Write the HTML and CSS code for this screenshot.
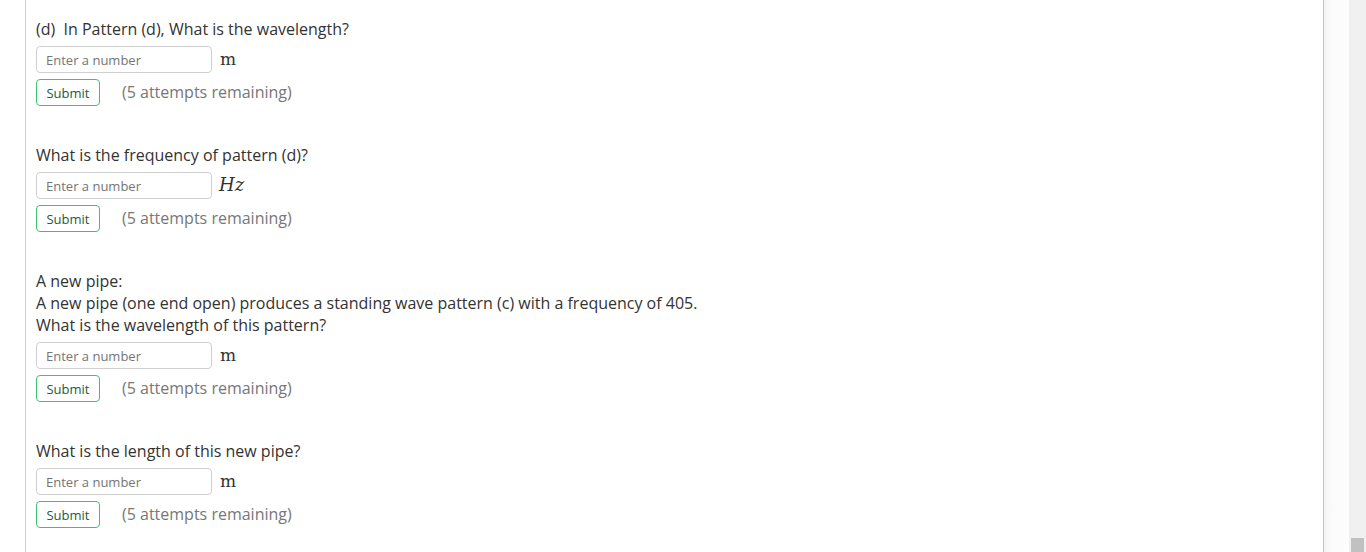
FILE: index.html
```html
<!DOCTYPE html>
<html>
<head>
<meta charset="utf-8">
<link rel="stylesheet" href="styles.css">
</head>
<body>
<div class="page">
  <div class="panel">
    <div class="q">
      <div class="prompt">(d)&nbsp; In Pattern (d), What is the wavelength?</div>
      <div class="row"><input class="num" type="text" placeholder="Enter a number"><span class="unit">m</span></div>
      <div class="row"><button class="submit">Submit</button><span class="att">(5 attempts remaining)</span></div>
    </div>
    <div class="q">
      <div class="prompt">What is the frequency of pattern (d)?</div>
      <div class="row"><input class="num" type="text" placeholder="Enter a number"><span class="unit it">Hz</span></div>
      <div class="row"><button class="submit">Submit</button><span class="att">(5 attempts remaining)</span></div>
    </div>
    <div class="q">
      <div class="prompt">A new pipe:<br>A new pipe (one end open) produces a standing wave pattern (c) with a frequency of 405.<br>What is the wavelength of this pattern?</div>
      <div class="row"><input class="num" type="text" placeholder="Enter a number"><span class="unit">m</span></div>
      <div class="row"><button class="submit">Submit</button><span class="att">(5 attempts remaining)</span></div>
    </div>
    <div class="q">
      <div class="prompt">What is the length of this new pipe?</div>
      <div class="row"><input class="num" type="text" placeholder="Enter a number"><span class="unit">m</span></div>
      <div class="row"><button class="submit">Submit</button><span class="att">(5 attempts remaining)</span></div>
    </div>
  </div>
  <div class="strip"></div>
  <div class="scrollbar"><div class="thumb"></div></div>
</div>
</body>
</html>
```
FILE: styles.css
```css
html, body {
  margin: 0;
  padding: 0;
  background: #fff;
  height: 552px;
  overflow: hidden;
}
body {
  font-family: "Open Sans", "Liberation Sans", sans-serif;
  color: #333;
}
.page {
  display: flex;
  height: 552px;
}
.panel {
  flex: none;
  margin-left: 25px;
  width: 1287px;
  border-left: 1px solid #d0d0d0;
  border-right: 1px solid #c4c4c4;
  padding: 18px 0 0 10px;
  display: flex;
  flex-direction: column;
  gap: 38px;
}
.strip {
  flex: none;
  width: 25px;
  background: linear-gradient(to right, #f4f4f4, #fcfcfc 40%, #fdfdfd);
}
.scrollbar {
  flex: none;
  width: 17px;
  background: #f0f0f0;
  display: flex;
  flex-direction: column;
  justify-content: flex-end;
  align-items: center;
}
.thumb {
  width: 13px;
  height: 14px;
  background: #c1c1c1;
}
.q {
  display: flex;
  flex-direction: column;
  gap: 6px;
}
.prompt {
  font-size: 16px;
  line-height: 22px;
}
.row {
  display: flex;
  align-items: center;
  height: 27px;
}
.num {
  box-sizing: border-box;
  width: 176px;
  height: 27px;
  border: 1px solid #cfcfcf;
  border-radius: 4px;
  padding: 0 9px;
  font-family: "Open Sans", "Liberation Sans", sans-serif;
  font-size: 13px;
  color: #333;
  background: #fff;
  outline: none;
  margin: 0;
}
.num::placeholder {
  color: #757575;
}
.unit {
  margin-left: 8px;
  font-family: "DejaVu Serif", "Liberation Serif", serif;
  font-size: 17px;
  color: #333;
  position: relative;
  top: -1px;
}
.unit.it {
  font-family: "DejaVu Serif", "Liberation Serif", serif;
  font-style: italic;
  font-size: 18px;
  margin-left: 7px;
}
.submit {
  box-sizing: border-box;
  width: 64px;
  height: 27px;
  border: 1px solid #3cc56e;
  border-radius: 4px;
  background: #fff;
  color: #1f5a36;
  font-family: "Open Sans", "Liberation Sans", sans-serif;
  font-size: 13px;
  padding: 0;
  margin: 0;
}
.att {
  margin-left: 22px;
  font-size: 16px;
  color: #777;
  position: relative;
  top: -1px;
}
```
